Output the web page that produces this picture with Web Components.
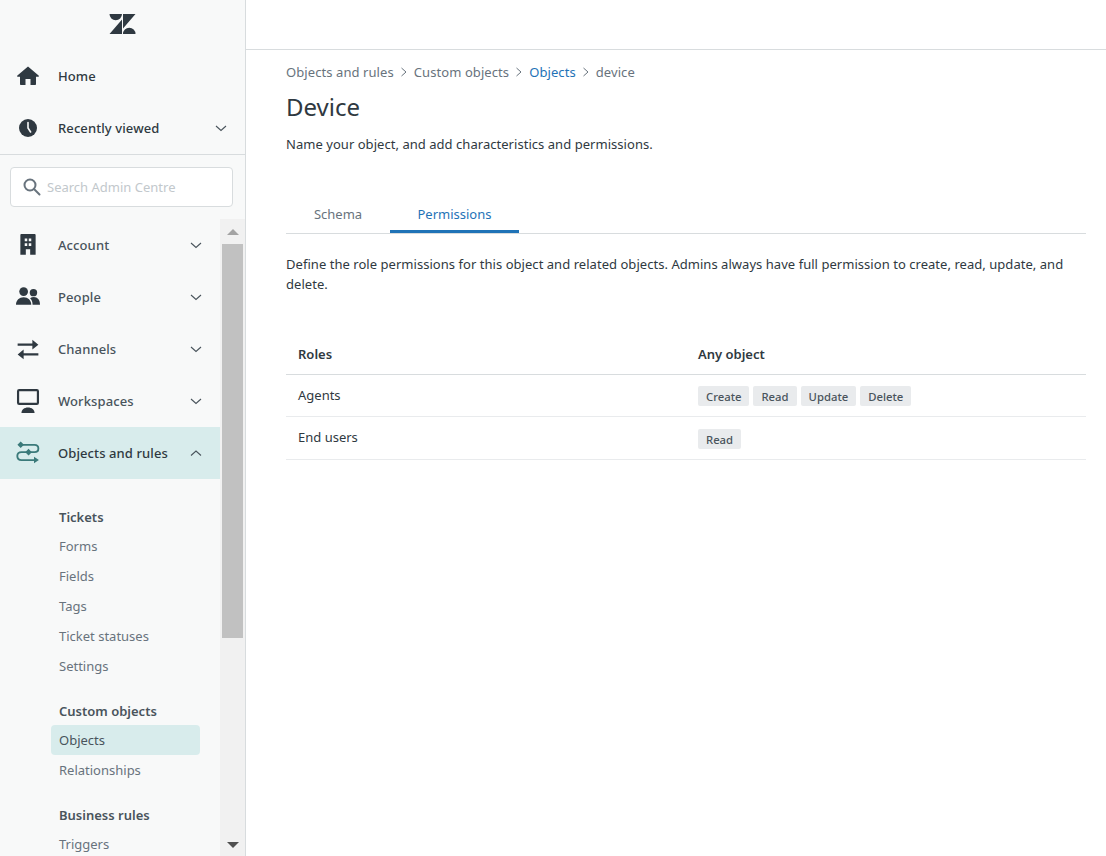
<!DOCTYPE html>
<html lang="en">
<head>
<meta charset="utf-8">
<title>Device</title>
<style>
    html, body { margin: 0; height: 100%; overflow: hidden; }
    body {
        font-family: "Noto Sans", "Open Sans", sans-serif;
        font-size: 13px;
        color: #2f3941;
        display: flex;
        height: 856px;
    }
</style>
</head>
<body>
<admin-sidebar>
    <nav-item slot="top" label="Home" icon="home" dark></nav-item>
    <nav-item slot="top" label="Recently viewed" icon="clock" chevron="down" dark></nav-item>

    <nav-item label="Account" icon="building" chevron="down"></nav-item>
    <nav-item label="People" icon="people" chevron="down"></nav-item>
    <nav-item label="Channels" icon="arrows" chevron="down"></nav-item>
    <nav-item label="Workspaces" icon="monitor" chevron="down"></nav-item>
    <nav-item label="Objects and rules" icon="objects" chevron="up" active></nav-item>

    <nav-group label="Tickets" style="margin-top:24px">
        <nav-link>Forms</nav-link>
        <nav-link>Fields</nav-link>
        <nav-link>Tags</nav-link>
        <nav-link>Ticket statuses</nav-link>
        <nav-link>Settings</nav-link>
    </nav-group>
    <nav-group label="Custom objects" style="margin-top:16px">
        <nav-link selected>Objects</nav-link>
        <nav-link>Relationships</nav-link>
    </nav-group>
    <nav-group label="Business rules" style="margin-top:16px">
        <nav-link>Triggers</nav-link>
    </nav-group>
</admin-sidebar>

<object-page>
    <bread-crumbs></bread-crumbs>
    <h-title>Device</h-title>
    <p-text style="margin-top:12px">Name your object, and add characteristics and permissions.</p-text>
    <tab-bar></tab-bar>
    <p-text style="margin-top:20px;line-height:20px">Define the role permissions for this object and related objects. Admins always have full permission to create, read, update, and delete.</p-text>
    <role-table></role-table>
</object-page>

<script>
const ICONS = {
    home: '<path fill="currentColor" d="M11 1.6 .4 10.6c-.5.5-.2 1.2.5 1.2H3v7.4c0 .5.3.8.8.8h4.7v-6h5v6h4.7c.5 0 .8-.3.8-.8v-7.4h2.1c.7 0 1-.7.5-1.2z"/>',
    clock: '<circle cx="11" cy="11" r="9" fill="currentColor"/><path d="M11 5.5V11l2.6 4" fill="none" stroke="#f8f9f9" stroke-width="1.6" stroke-linecap="round"/>',
    building: '<path fill="currentColor" fill-rule="evenodd" d="M4 2c0-.6.4-1 1-1h12c.6 0 1 .4 1 1v18h-5v-5H9v5H4zM8 5v2.600h2.300V5zm3.700 0v2.600H14V5zM8 9.400V12h2.300V9.400zm3.700 0V12H14V9.400z"/>',
    people: '<circle cx="7" cy="6" r="4" fill="currentColor"/><circle cx="16" cy="7" r="3.400" fill="currentColor"/><path fill="currentColor" d="M0 18c0-4 3-6.800 7-6.800s7 2.800 7 6.800zM15.200 18c0-2.500-.8-4.500-2.300-5.900 1-.6 2.200-1 3.400-1 3.400 0 5.700 2.600 5.700 6.900z"/>',
    arrows: '<path fill="none" stroke="currentColor" stroke-width="2" d="M1.500 7H17M4 16h16.500"/><path fill="currentColor" d="M15 2.500 20.500 7 15 11.500zM7 11.500 1.500 16 7 20.500z"/>',
    monitor: '<rect x="1.900" y="1" width="18.200" height="12.700" rx="1" fill="none" stroke="currentColor" stroke-width="2"/><path fill="currentColor" d="M5 22c0-3 2.600-5 6-5s6 2 6 5z"/>',
    objects: '<path fill="none" stroke="currentColor" stroke-width="1.700" d="M5 3.500h12c2.500 0 3.500 1.500 3.500 3.300S19.500 10.200 17 10.200H5c-2.500 0-3.800 1.600-3.800 3.600s1.300 3.700 3.800 3.700h12"/><path fill="currentColor" d="M4.300.500 1.300 3.500 4.300 6.500 7.300 3.500zM11.500 7.200 8.500 10.200l3 3 3-3zM16.500 14.500l4.500 3-4.500 3z"/>'
};

// small helper so every element gets an open shadow root with its own styles
const shadow = (el, html) => {
    el.attachShadow({ mode: 'open' }).innerHTML = html;
};

const chevron = (dir) => `
    <svg class="chev" width="14" height="14" viewBox="0 0 14 14">
        <path fill="none" stroke="#49545c" stroke-width="1.100" d="${dir === 'up' ? 'M2 9.500 7 5l5 4.500' : 'M2 5l5 4.500L12 5'}"/>
    </svg>`;

class AdminSidebar extends HTMLElement {
    constructor() {
        super();
        shadow(this, `
            <style>
                :host {
                    display: flex;
                    flex-direction: column;
                    width: 245px;
                    height: 856px;
                    flex: none;
                    background: #f8f9f9;
                    border-right: 1px solid #d8dcde;
                    overflow: hidden;
                }
                .logo { height: 50px; display: flex; justify-content: center; padding-top: 14px; box-sizing: border-box; }
                .top { border-bottom: 1px solid #d8dcde; margin-bottom: 12px; }
                .search {
                    height: 40px;
                    flex: none;
                    margin: 0 12px 12px 10px;
                    box-sizing: border-box;
                    background: #fff;
                    border: 1px solid #d8dcde;
                    border-radius: 4px;
                    display: flex;
                    align-items: center;
                    gap: 6px;
                    padding-left: 12px;
                    color: #c2c8cc;
                }
                .body { display: flex; flex: 1; min-height: 0; }
                .scroll { width: 220px; flex: none; overflow: hidden; }
                .bar {
                    width: 25px;
                    background: #f1f1f1;
                    display: flex;
                    flex-direction: column;
                    align-items: center;
                    box-sizing: border-box;
                }
                .up, .down { width: 0; height: 0; border-left: 6px solid transparent; border-right: 6px solid transparent; }
                .up { border-bottom: 6px solid #a3a3a3; margin: 10px 0 9px; }
                .thumb { width: 21px; height: 394px; background: #c1c1c1; }
                .down { border-top: 6px solid #505050; margin-top: auto; margin-bottom: 8px; }
            </style>
            <div class="top">
                <div class="logo">
                    <svg width="27" height="20" viewBox="0 0 26 20">
                        <path fill="#2f3941" d="M12.500 5.500V20H0zM12.500 0a6.250 6.250 0 0 1-12.500 0zM13.500 20a6.250 6.250 0 0 1 12.500 0zM13.500 14.500V0H26z"/>
                    </svg>
                </div>
                <slot name="top"></slot>
            </div>
            <div class="search">
                <svg width="18" height="18" viewBox="0 0 18 18">
                    <circle cx="7" cy="7" r="5.500" fill="none" stroke="#68737d" stroke-width="2"/>
                    <path d="M11 11l5.500 5.500" stroke="#68737d" stroke-width="2" stroke-linecap="round"/>
                </svg>
                <span>Search Admin Centre</span>
            </div>
            <div class="body">
                <div class="scroll"><slot></slot></div>
                <div class="bar">
                    <div class="up"></div>
                    <div class="thumb"></div>
                    <div class="down"></div>
                </div>
            </div>`);
    }
}

class NavItem extends HTMLElement {
    connectedCallback() {
        const dir = this.getAttribute('chevron');
        const icon = this.getAttribute('icon');
        const label = this.getAttribute('label');
        const size = icon === 'home' || icon === 'clock' ? 22 : 24;
        shadow(this, `
            <style>
                :host {
                    display: flex;
                    align-items: center;
                    height: 52px;
                    font-size: 13px;
                    font-weight: 500;
                    letter-spacing: .1px;
                    color: #49545c;
                    position: relative;
                }
                :host([dark]) { color: #2f3941; }
                :host([active]) { background: #d8ecec; color: #2f3941; }
                .icon { width: 58px; flex: none; display: flex; justify-content: center; box-sizing: border-box; padding-right: 2px; color: #2f3941; }
                :host([active]) .icon { color: #3b7a7a; }
                .label { flex: 1; white-space: nowrap; }
                .chev { flex: none; margin-right: 17px; }
            </style>
            <span class="icon"><svg width="${size}" height="${size}" viewBox="0 0 22 22">${ICONS[icon]}</svg></span>
            <span class="label">${label}</span>
            ${dir ? chevron(dir) : ''}`);
    }
}

class NavGroup extends HTMLElement {
    connectedCallback() {
        shadow(this, `
            <style>
                :host { display: block; }
                .head { height: 28px; line-height: 28px; padding-left: 59px; font-size: 13px; font-weight: 600; color: #49545c; }
            </style>
            <div class="head">${this.getAttribute('label')}</div>
            <slot></slot>`);
    }
}

class NavLink extends HTMLElement {
    constructor() {
        super();
        shadow(this, `
            <style>
                :host {
                    display: block;
                    height: 30px;
                    line-height: 30px;
                    margin: 0 20px 0 51px;
                    padding-left: 8px;
                    font-size: 13px;
                    color: #68737d;
                    border-radius: 4px;
                }
                :host([selected]) { background: #d8ecec; color: #49545c; }
            </style>
            <slot></slot>`);
    }
}

class ObjectPage extends HTMLElement {
    constructor() {
        super();
        shadow(this, `
            <style>
                :host { display: block; flex: 1; min-width: 0; }
                .topbar { height: 49px; border-bottom: 1px solid #d8dcde; }
                .content { padding: 12px 20px 0 40px; }
            </style>
            <div class="topbar"></div>
            <div class="content"><slot></slot></div>`);
    }
}

class BreadCrumbs extends HTMLElement {
    constructor() {
        super();
        const sep = `<svg width="8" height="12" viewBox="0 0 8 12"><path d="M1.500 2l4.500 4-4.500 4" fill="none" stroke="#68737d" stroke-width="1"/></svg>`;
        shadow(this, `
            <style>
                :host { display: flex; align-items: center; gap: 6px; height: 20px; font-size: 13px; letter-spacing: .08px; color: #68737d; }
                .link { color: #1f73b7; }
            </style>
            <span>Objects and rules</span>${sep}
            <span>Custom objects</span>${sep}
            <span class="link">Objects</span>${sep}
            <span>device</span>`);
    }
}

class HTitle extends HTMLElement {
    constructor() {
        super();
        shadow(this, `
            <style>
                :host { display: block; margin-top: 10px; font-size: 24px; line-height: 30px; font-weight: 400; color: #2f3941; }
            </style>
            <slot></slot>`);
    }
}

class PText extends HTMLElement {
    constructor() {
        super();
        shadow(this, `
            <style>
                :host { display: block; font-size: 13px; line-height: 20px; letter-spacing: .04px; color: #2f3941; }
            </style>
            <slot></slot>`);
    }
}

class TabBar extends HTMLElement {
    constructor() {
        super();
        shadow(this, `
            <style>
                :host { display: flex; margin-top: 40px; height: 40px; box-sizing: border-box; border-bottom: 1px solid #d8dcde; font-size: 13px; color: #68737d; }
                .tab { display: flex; align-items: center; justify-content: center; height: 39px; box-sizing: border-box; padding-top: 4px; padding-bottom: 3px; }
                .schema { width: 104px; }
                .perm { width: 129px; color: #1f73b7; border-bottom: 3px solid #1f73b7; padding-bottom: 0; }
            </style>
            <div class="tab schema">Schema</div>
            <div class="tab perm">Permissions</div>`);
    }
}

class RoleTable extends HTMLElement {
    constructor() {
        super();
        const tag = (t) => `<span class="tag">${t}</span>`;
        shadow(this, `
            <style>
                :host { display: block; margin-top: 40px; font-size: 13px; color: #2f3941; }
                .row { display: grid; grid-template-columns: 400px 1fr; align-items: center; padding-left: 12px; box-sizing: border-box; border-bottom: 1px solid #e9ebed; }
                .head { height: 41px; font-weight: 600; border-bottom-color: #d8dcde; }
                .tall { height: 42px; }
                .tall2 { height: 43px; }
                .tall2 .tags { margin-top: 2px; }
                .name { padding-bottom: 2px; }
                .tags { display: flex; gap: 4px; }
                .tag {
                    height: 20px;
                    line-height: 21px;
                    padding: 0 8px;
                    background: #e9ebed;
                    border-radius: 2px;
                    font-size: 11.300px;
                    font-weight: 500;
                    color: #49545c;
                }
            </style>
            <div class="row head"><span>Roles</span><span>Any object</span></div>
            <div class="row tall"><span class="name">Agents</span><span class="tags">${tag('Create')}${tag('Read')}${tag('Update')}${tag('Delete')}</span></div>
            <div class="row tall2"><span class="name">End users</span><span class="tags">${tag('Read')}</span></div>`);
    }
}

customElements.define('admin-sidebar', AdminSidebar);
customElements.define('nav-item', NavItem);
customElements.define('nav-group', NavGroup);
customElements.define('nav-link', NavLink);
customElements.define('object-page', ObjectPage);
customElements.define('bread-crumbs', BreadCrumbs);
customElements.define('h-title', HTitle);
customElements.define('p-text', PText);
customElements.define('tab-bar', TabBar);
customElements.define('role-table', RoleTable);
</script>
</body>
</html>
